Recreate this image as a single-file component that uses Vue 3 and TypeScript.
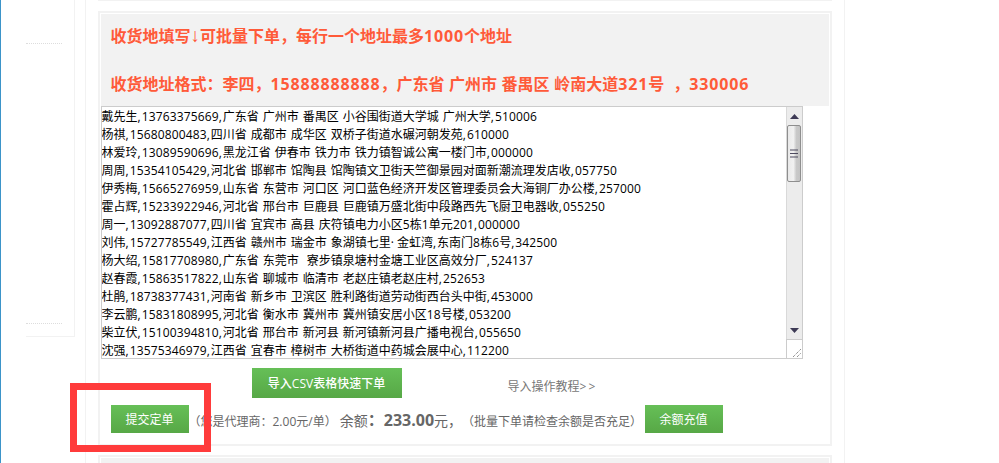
<script setup lang="ts">
const rows: string[] = [
  '戴先生,13763375669,广东省 广州市 番禺区 小谷围街道大学城 广州大学,510006',
  '杨祺,15680800483,四川省 成都市 成华区 双桥子街道水碾河朝发苑,610000',
  '林爱玲,13089590696,黑龙江省 伊春市 铁力市 铁力镇智诚公寓一楼门市,000000',
  '周周,15354105429,河北省 邯郸市 馆陶县 馆陶镇文卫街天竺御景园对面新潮流理发店收,057750',
  '伊秀梅,15665276959,山东省 东营市 河口区 河口蓝色经济开发区管理委员会大海铜厂办公楼,257000',
  '霍占辉,15233922946,河北省 邢台市 巨鹿县 巨鹿镇万盛北街中段路西先飞厨卫电器收,055250',
  '周一,13092887077,四川省 宜宾市 高县 庆符镇电力小区5栋1单元201,000000',
  '刘伟,15727785549,江西省 赣州市 瑞金市 象湖镇七里·金虹湾,东南门8栋6号,342500',
  '杨大绍,15817708980,广东省 东莞市  寮步镇泉塘村金塘工业区高效分厂,524137',
  '赵春霞,15863517822,山东省 聊城市 临清市 老赵庄镇老赵庄村,252653',
  '杜鹃,18738377431,河南省 新乡市 卫滨区 胜利路街道劳动街西台头中街,453000',
  '李云鹏,15831808995,河北省 衡水市 冀州市 冀州镇安居小区18号楼,053200',
  '柴立伏,15100394810,河北省 邢台市 新河县 新河镇新河县广播电视台,055650',
  '沈强,13575346979,江西省 宜春市 樟树市 大桥街道中药城会展中心,112200'
]
const parts = (row: string): string[] => row.split(/(\d+|,|·)/)
const kind = (s: string): string => (/^\d+$/.test(s) ? 'n' : s === ',' ? 'c' : s === '·' ? 'd' : '')
</script>

<template>
  <div class="page">
    <aside class="side">
      <div class="dots first"></div>
      <div class="dots last"></div>
    </aside>
    <main class="main">
      <div class="prev"></div>
      <section class="card">
        <header class="notice">
          <p>收货地填写<span class="arr">↓</span>可批量下单，每行一个地址最多<span class="hn">1000</span>个地址</p>
          <p class="blank">&nbsp;</p>
          <p>收货地址格式：李四，<span class="hn">15888888888</span>，广东省 广州市 番禺区 岭南大道<span class="hn">321</span>号&nbsp; ，<span class="hn">330006</span></p>
        </header>
        <div class="box">
          <div class="lines">
            <div v-for="row in rows" :key="row" class="line"><span v-for="(p, i) in parts(row)" :key="i" :class="kind(p)">{{ p }}</span></div>
          </div>
          <div class="bar">
            <div class="arrow">
              <svg width="9" height="5" viewBox="0 0 9 5"><path d="M4.5 0 9 5H0z" fill="#3d3a55" /></svg>
            </div>
            <div class="thumb">
              <svg width="8" height="9" viewBox="0 0 8 9"><path d="M0 1h8M0 4.5h8M0 8h8" stroke="#4d4a5e" stroke-width="1.2" /></svg>
            </div>
            <div class="track"></div>
            <div class="arrow">
              <svg width="9" height="5" viewBox="0 0 9 5"><path d="M0 0h9L4.5 5z" fill="#3d3a55" /></svg>
            </div>
            <div class="grip">
              <svg width="8" height="8" viewBox="0 0 8 8"><path d="M0 8 8 0M4 8l4-4" stroke="#666" stroke-dasharray="1 1" /></svg>
            </div>
          </div>
        </div>
        <div class="import">
          <button class="btn wide" type="button">导入CSV表格快速下单</button>
          <a class="guide">导入操作教程<span class="more">&gt;&gt;</span></a>
        </div>
        <div class="submit">
          <button class="btn" type="button">提交定单</button>
          <span class="info">（您是代理商：2.00元/单） <span class="big">余额</span><b>：233.00</b><span class="big">元，</span>（批量下单请检查余额是否充足）</span>
          <button class="btn" type="button">余额充值</button>
        </div>
      </section>
      <section class="card next">
        <div class="next-head"></div>
      </section>
    </main>
    <div class="mark"></div>
  </div>
</template>

<style scoped>
.page {
  position: relative;
  display: flex;
  align-items: flex-start;
  box-sizing: border-box;
  height: 463px;
  overflow: hidden;
  background: #fff;
  border-left: 1.5px solid #3b94c9;
  font-family: "Open Sans", "Noto Sans CJK SC", sans-serif;
  font-size: 12px;
  text-spacing-trim: space-all;
}
.side {
  box-sizing: border-box;
  flex: none;
  width: 49.5px;
  height: 337px;
  margin-left: 24.5px;
  border-right: 1.5px solid #f2f2f2;
  border-bottom: 1.5px solid #f2f2f2;
}
.dots {
  width: 36px;
  border-top: 1px dotted #ddd;
}
.dots.first { margin-top: 43px; }
.dots.last { margin-top: 279px; }
.main {
  box-sizing: border-box;
  flex: none;
  width: 760px;
  height: 463px;
  margin-left: 9.5px;
  padding-left: 12px;
  border-left: 1px solid #f2f2f2;
  border-right: 1px solid #f2f2f2;
}
.prev {
  width: 734px;
  height: 2px;
  margin-top: -1px;
  background: #f2f2f2;
}
.card {
  box-sizing: border-box;
  width: 734px;
  height: 435px;
  margin-top: 10px;
  padding: 1px;
  border: 2px solid #f2f2f2;
}
.notice {
  box-sizing: border-box;
  height: 92px;
  padding: 10px;
  background: #f2f2f2;
  color: #ff5a39;
  font-size: 16px;
  font-weight: 700;
  line-height: 24px;
  word-spacing: .4px;
}
.notice p { margin: 0; }
.arr {
  font-family: "Liberation Sans", sans-serif;
  font-size: 19px;
  font-weight: 400;
  line-height: 0;
}
.hn { letter-spacing: .85px; }
.box {
  box-sizing: border-box;
  display: flex;
  width: 702px;
  height: 253px;
  border: 1px solid #ccc;
  background: #fff;
}
.lines {
  flex: 1;
  min-width: 0;
  padding-top: 1px;
  overflow: hidden;
  color: #000;
  line-height: 18px;
}
.line {
  height: 18px;
  white-space: pre;
  word-spacing: .9px;
}
.n { letter-spacing: .14px; }
.c { letter-spacing: 1px; }
.d { letter-spacing: 3px; }
.bar {
  box-sizing: border-box;
  display: flex;
  flex: none;
  flex-direction: column;
  width: 16px;
  background: #ececec;
  border-left: 1px solid #d9d9d9;
}
.arrow {
  display: flex;
  flex: none;
  align-items: center;
  justify-content: center;
  height: 18px;
}
.thumb {
  box-sizing: border-box;
  display: flex;
  flex: none;
  align-items: center;
  justify-content: center;
  height: 57px;
  margin-right: 1px;
  border: 1px solid #8e8e8e;
  border-radius: 2px;
  background: linear-gradient(90deg, #e9e9e9, #f1f1f1 45%, #c8c8c8 70%, #c4c4c4);
}
.track { flex: 1; }
.grip {
  box-sizing: border-box;
  display: flex;
  flex: none;
  align-items: flex-end;
  justify-content: flex-end;
  height: 19px;
  margin-left: -1px;
  padding: 0 1px 1px 0;
  background: #fff;
  border-top: 1px solid #ccc;
  border-left: 1px solid #ccc;
}
.import {
  display: flex;
  align-items: center;
  height: 30px;
  margin-top: 9px;
  padding-left: 151px;
}
.btn {
  box-sizing: border-box;
  flex: none;
  width: 78px;
  height: 28px;
  padding: 0;
  border: 0;
  background: linear-gradient(#66bf57, #57a846);
  color: #fff;
  font: inherit;
}
.btn.wide {
  width: 150px;
  height: 30px;
  font-weight: 500;
}
.guide {
  margin: 6px 0 0 106px;
  color: #777;
}
.more { letter-spacing: 2px; }
.submit {
  display: flex;
  align-items: center;
  height: 28px;
  margin-top: 7px;
  padding-left: 10px;
}
.info {
  width: 456px;
  color: #666;
  white-space: pre;
}
.big { font-size: 14px; }
.info b {
  font-size: 16px;
  font-weight: 700;
}
.next {
  height: 20px;
  margin-top: 9px;
}
.next-head {
  height: 20px;
  background: #f2f2f2;
}
.mark {
  position: absolute;
  top: 383px;
  left: 68.5px;
  box-sizing: border-box;
  width: 141px;
  height: 69px;
  border: 7px solid #ff3b3b;
}
</style>
